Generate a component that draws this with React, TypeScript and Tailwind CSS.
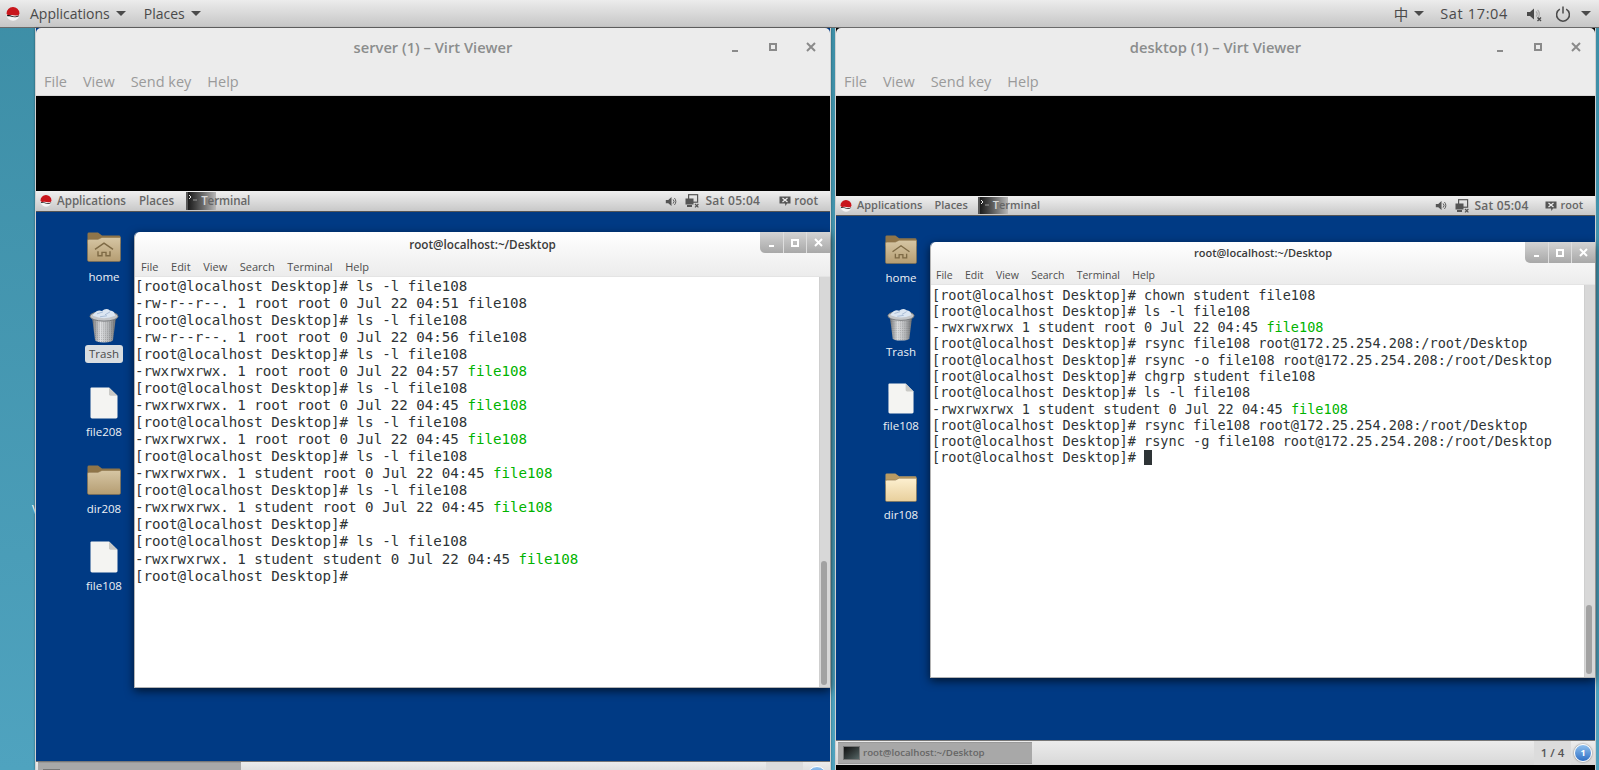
import React from "react";

const ui = "font-['Open_Sans',sans-serif]";
const mono = "font-['DejaVu_Sans_Mono',monospace]";

function RedHat({ size }: { size: number }) {
  return (
    <svg width={size} height={size} viewBox="0 0 16 16" className="shrink-0">
      <circle cx="8" cy="8" r="7.6" fill="#f4f4f4" />
      <path d="M0.6 7.6 A7.4 7.4 0 0 1 15.4 7.2 C15.6 9 13.6 10.2 11 9.7 C8 9.2 5.5 8.6 3.6 9.6 C2 9 0.9 8.6 0.6 7.6Z" fill="#c8161c" />
      <path d="M1 9.5 C3 8.8 5 9.4 7 10.2 C10 11.2 13 11 15 9.5 C15 9.8 14.8 10.2 14.6 10.6 C11.5 12.4 8 11.6 5.5 10.8 C4 10.4 2.6 10.3 1.6 10.7Z" fill="#111" />
    </svg>
  );
}

function Caret({ cls = "" }: { cls?: string }) {
  return <span className={`inline-block w-0 h-0 border-l-[5px] border-r-[5px] border-t-[5px] border-l-transparent border-r-transparent border-t-[#4a4a4a] ${cls}`} />;
}

function Speaker({ muted, size = 16, color = "#4a4a4a" }: { muted?: boolean; size?: number; color?: string }) {
  return (
    <svg width={size} height={size} viewBox="0 0 16 16" fill="none">
      <path d="M1 6 H4 L8 2.5 V13.5 L4 10 H1 Z" fill={color} />
      <path d="M10 5.5 A3.6 3.6 0 0 1 10 10.5 M11.6 3.8 A6 6 0 0 1 11.6 12.2" stroke={muted ? "#aaa" : color} strokeWidth="1.2" />
      {muted && <path d="M11.5 11.5 L15 15 M15 11.5 L11.5 15" stroke={color} strokeWidth="1.4" />}
    </svg>
  );
}

function Power() {
  return (
    <svg width="16" height="16" viewBox="0 0 16 16" fill="none" stroke="#4a4a4a" strokeWidth="1.5">
      <path d="M4.8 3.2 A6.4 6.4 0 1 0 11.2 3.2" />
      <path d="M8 0.5 V7.5" />
    </svg>
  );
}

function NetIcon() {
  return (
    <svg width="14" height="14" viewBox="0 0 14 14" fill="none">
      <rect x="3.6" y="0.7" width="9" height="7.5" stroke="#555" strokeWidth="1.2" fill="none" />
      <rect x="0.5" y="4.5" width="8" height="6" fill="#555" />
      <rect x="2" y="11" width="5" height="2" fill="#555" />
      <path d="M10 10 L13.4 13.4 M13.4 10 L10 13.4" stroke="#555" strokeWidth="1.2" />
    </svg>
  );
}

function UserIcon() {
  return (
    <svg width="12" height="12" viewBox="0 0 12 12">
      <path d="M0.5 1.5 H11.5 V8.5 H8 L6.5 11 L6 8.5 H0.5 Z" fill="#555" />
      <path d="M3.5 3 L8.5 7 M8.5 3 L3.5 7" stroke="#eee" strokeWidth="1.2" />
    </svg>
  );
}

function Folder({ home, light, w = 34, h = 30, uid }: { home?: boolean; light?: boolean; w?: number; h?: number; uid: string }) {
  const top = light ? "#fdf0d0" : "#d6c6a4";
  const bot = light ? "#e8cf9c" : "#b59d72";
  const tab = light ? "#b89a63" : "#8f7549";
  return (
    <svg width={w} height={h} viewBox="0 0 34 31" preserveAspectRatio="none">
      <defs>
        <linearGradient id={uid} x1="0" y1="0" x2="0" y2="1">
          <stop offset="0" stopColor={top} />
          <stop offset="1" stopColor={bot} />
        </linearGradient>
      </defs>
      <path d="M0.5 2 Q0.5 0.5 2 0.5 H11 L15 3.5 H32 Q33.5 3.5 33.5 5 V12 H0.5 Z" fill={tab} />
      <path d="M0.5 9 Q0.5 7.6 2 7.6 H11 L15 5.6 H33.5 V29 Q33.5 30.5 32 30.5 H2 Q0.5 30.5 0.5 29 Z" fill={`url(#${uid})`} stroke="#8a7147" strokeWidth="0.6" />
      {home && (
        <g fill="none" stroke="#7e6a45" strokeWidth="1.4">
          <path d="M8 18 L17 11.5 L26 18" />
          <path d="M11 20 V24.5 H15 V21 H19 V24.5 H23 V20" />
        </g>
      )}
    </svg>
  );
}

function Trash({ w = 30, h = 35, uid }: { w?: number; h?: number; uid: string }) {
  return (
    <svg width={w} height={h} viewBox="0 0 30 36" preserveAspectRatio="none">
      <defs>
        <linearGradient id={`${uid}b`} x1="0" y1="0" x2="1" y2="0">
          <stop offset="0" stopColor="#77797c" />
          <stop offset="0.35" stopColor="#dfe0e2" />
          <stop offset="0.7" stopColor="#b4b6b8" />
          <stop offset="1" stopColor="#6e7073" />
        </linearGradient>
        <pattern id={`${uid}p`} width="2" height="2" patternUnits="userSpaceOnUse">
          <rect width="1" height="1" fill="#000" opacity="0.18" />
        </pattern>
      </defs>
      <path d="M3 9 L6 33 Q6.5 35.5 15 35.5 Q23.5 35.5 24 33 L27 9 Z" fill={`url(#${uid}b)`} />
      <path d="M3 9 L6 33 Q6.5 35.5 15 35.5 Q23.5 35.5 24 33 L27 9 Z" fill={`url(#${uid}p)`} />
      <ellipse cx="15" cy="8.5" rx="14" ry="5" fill="#c4c6c9" stroke="#77797c" />
      <path d="M4 7 Q8 1 13 3 Q17 -0.5 21 2.5 Q26 3 26 8 Q15 13 4 8 Z" fill="#dce6f2" />
      <path d="M8 6 L14 4 M16 7 L21 4 M11 9 L18 8" stroke="#a8bcd6" strokeWidth="1" />
    </svg>
  );
}

function FileIcon({ w = 28, h = 32 }: { w?: number; h?: number }) {
  return (
    <svg width={w} height={h} viewBox="0 0 28 33" preserveAspectRatio="none">
      <path d="M1.5 0.5 H19 L27.5 9 V31 Q27.5 32.5 26 32.5 H2 Q0.5 32.5 0.5 31 V1.5 Q0.5 0.5 1.5 0.5 Z" fill="#f4f4f2" />
      <path d="M19 0.5 V7.5 Q19 9 20.5 9 H27.5 Z" fill="#c9c9c6" />
    </svg>
  );
}

function DeskIcon({ left, top, gap, label, children, boxed }: { left: number; top: number; gap: number; label: string; children: React.ReactNode; boxed?: boolean }) {
  return (
    <div className="absolute w-[70px] flex flex-col items-center" style={{ left, top }}>
      <div className="h-[36px] flex items-end justify-center">{children}</div>
      <span
        style={{ marginTop: gap }}
        className={
          boxed
            ? `${ui} text-[11.5px] leading-[18px] px-[4px] rounded-[3px] bg-[#d9dde0] text-[#4a4a4a]`
            : `${ui} text-[11.5px] leading-[16px] text-[#eef1f5]`
        }
      >
        {label}
      </span>
    </div>
  );
}

function WindowControls() {
  return (
    <div className="absolute right-[13px] top-[13px] flex gap-[26px] items-center">
      <span className="w-[12px] h-[12px] flex items-end justify-center"><span className="block w-[6px] h-[2px] mb-[1px] bg-[#8a8a8a]" /></span>
      <span className="w-[12px] h-[12px] flex items-center justify-center"><span className="block w-[8px] h-[8px] border-2 border-[#8a8a8a]" /></span>
      <svg width="12" height="12" viewBox="0 0 12 12"><path d="M2 2 L10 10 M10 2 L2 10" stroke="#8a8a8a" strokeWidth="2" /></svg>
    </div>
  );
}

function ViewerHeader({ title }: { title: string }) {
  return (
    <div className="relative h-[68px] shrink-0 bg-[#ececec] border-b border-[#d8d8d8] rounded-t-[5px]">
      <div className={`${ui} pt-[9px] text-center text-[14.7px] font-semibold leading-[20px] text-[#8b8d8d]`}>{title}</div>
      <WindowControls />
      <div className={`${ui} flex gap-[16px] pt-[15px] pl-[8px] text-[14.5px] leading-[20px] text-[#9a9a9a]`}>
        <span>File</span><span>View</span><span>Send key</span><span>Help</span>
      </div>
    </div>
  );
}

function TerminalGlyph() {
  return (
    <svg width="10" height="8" viewBox="0 0 10 8" className="absolute left-[2px] top-[3px]" fill="none" stroke="#eee" strokeWidth="1">
      <path d="M1 1 L3 3 L1 5" />
      <path d="M5 6 H9" stroke="#999" />
    </svg>
  );
}

function GuestPanel({ large }: { large?: boolean }) {
  return (
    <div
      className={`${large ? "h-[21px] text-[11.6px] pr-[12px]" : "h-[20px] text-[11px] pr-[12px]"} shrink-0 flex items-center pl-[4px] bg-gradient-to-b from-[#f0f0f0] to-[#c8c8c8] border-b border-[#555] ${ui} font-semibold text-[#666]`}
    >
      <RedHat size={12} />
      <span className="ml-[5px]">Applications</span>
      <span className={large ? "ml-[13px]" : "ml-[12px]"}>Places</span>
      <span className={`relative ${large ? "ml-[12px]" : "ml-[10px]"} h-full flex items-center`}>
        <span className="absolute left-0 top-[1px] bottom-[1px] w-[30px] bg-gradient-to-r from-[#1c1c1c] to-[#b8b8b8] border-l-2 border-[#555]" />
        <TerminalGlyph />
        <span className={`relative pl-[15px] ${large ? "tracking-[-0.1px]" : ""}`}><span className="text-[#d8d8d8]">T</span>erminal</span>
      </span>
      <div className="ml-auto flex items-center">
        <Speaker size={13} color="#555" />
        <span className="ml-[7px]"><NetIcon /></span>
        <span className={`ml-[6px] ${large ? "text-[12px] tracking-[0.3px]" : "text-[12px] tracking-[0.2px]"}`}>Sat 05:04</span>
        <span className={large ? "ml-[19px]" : "ml-[17px]"}><UserIcon /></span>
        <span className="ml-[3px]">root</span>
      </div>
    </div>
  );
}

function Taskbar() {
  return (
    <div className={`h-[25px] flex items-center pl-[2px] bg-gradient-to-b from-[#ececec] to-[#d8d8d8] border-t border-[#777] ${ui} font-semibold text-[#666] text-[9.7px]`}>
      <div className="w-[194px] h-[22px] flex items-center gap-[3px] pl-[5px] bg-[#a8a8a8] border-b border-t border-[#999]">
        <span className="w-[17px] h-[14px] border border-[#777] bg-gradient-to-br from-[#111] to-[#566] shrink-0" />
        <span>root@localhost:~/Desktop</span>
      </div>
      <div className="ml-auto h-full w-[37px] flex items-center justify-center bg-[#dcdcdc] text-[#555] text-[11.5px]">1 / 4</div>
      <div className="w-[24px] flex items-center justify-center">
        <span className="w-[18px] h-[18px] rounded-full bg-gradient-to-b from-[#8fc0ee] to-[#2f6fc4] border border-white flex items-center justify-center text-[9px] font-bold text-white shadow-[0_0_2px_rgba(0,0,0,0.6)]">1</span>
      </div>
    </div>
  );
}

/* The left guest's task bar runs off the bottom of the screen: only its top edge shows. */
function ClippedTaskbar() {
  return (
    <div className="h-[9px] shrink-0 overflow-hidden flex pl-[2px] bg-gradient-to-b from-[#ececec] to-[#e0e0e0] border-t border-[#777]">
      <div className="w-[203px] h-full pl-[5px] pt-[6px] bg-[#a8a8a8] border-t border-[#999]">
        <span className="block w-[17px] h-[14px] border border-[#777] bg-[#666]" />
      </div>
      <div className="ml-auto w-[37px] h-full bg-[#dcdcdc]" />
      <div className="w-[27px] pl-[4px] pt-[4px]">
        <span className="block w-[20px] h-[20px] rounded-full bg-gradient-to-b from-[#8fc0ee] to-[#2f6fc4] border border-white" />
      </div>
    </div>
  );
}

const P1 = "[root@localhost Desktop]# ";

function Line({ text, file }: { text: string; file?: string }) {
  return (
    <div className="whitespace-pre">
      {text}
      {file && <span className="text-[#00b300]">{file}</span>}
    </div>
  );
}

function TermMenu({ cls }: { cls: string }) {
  return (
    <div className={`${ui} flex ${cls} text-[#4e4e4e]`}>
      <span>File</span><span>Edit</span><span>View</span><span>Search</span><span>Terminal</span><span>Help</span>
    </div>
  );
}

function TermButtons() {
  return (
    <div className="absolute right-0 top-0 h-[21px] w-[70px] flex rounded-bl-[5px] bg-gradient-to-b from-[#d4d4d4] to-[#a8a8a8] overflow-hidden">
      <span className="flex-1 flex items-end justify-center pb-[6px] border-r border-[#dedede]"><span className="block w-[5px] h-[2px] bg-white" /></span>
      <span className="flex-1 flex items-center justify-center border-r border-[#dedede]"><span className="block w-[8px] h-[8px] border-2 border-white" /></span>
      <span className="flex-1 flex items-center justify-center">
        <svg width="9" height="9" viewBox="0 0 9 9"><path d="M1 1 L8 8 M8 1 L1 8" stroke="#fff" strokeWidth="2" /></svg>
      </span>
    </div>
  );
}

function Scrollbar({ thumb }: { thumb: string }) {
  return (
    <div className="w-[11px] shrink-0 bg-[#d8d8d8] border-l border-[#cfcfcf] relative">
      <div className={`absolute left-[1px] w-[6px] rounded-[3px] bg-[#a2a2a2] ${thumb}`} />
    </div>
  );
}

export default function App() {
  return (
    <div className="relative w-[1599px] h-[770px] overflow-hidden bg-gradient-to-b from-[#3d8ea6] to-[#4fa3bf]">
      {/* Top bar */}
      <div className={`${ui} absolute inset-x-0 top-0 h-[28px] flex items-center pl-[6px] pr-[8px] bg-gradient-to-b from-[#ececec] to-[#c6c6c6] border-b border-[#6a6a6a] text-[14px] text-[#4a4a4a]`}>
        <RedHat size={14} />
        <span className="ml-[10px]">Applications</span>
        <Caret cls="ml-[6px]" />
        <span className="ml-[18px]">Places</span>
        <Caret cls="ml-[6px]" />
        <div className="ml-auto flex items-center">
          <span className="font-['Noto_Sans_CJK_SC',sans-serif] text-[14.5px]">中</span>
          <Caret cls="ml-[6px]" />
          <span className="ml-[16px] text-[14.5px] tracking-[0.65px]">Sat 17:04</span>
          <span className="ml-[18px]"><Speaker muted /></span>
          <span className="ml-[13px]"><Power /></span>
          <Caret cls="ml-[10px]" />
        </div>
      </div>

      {/* Fragment of a desktop label peeking out beside the left window */}
      <span className={`${ui} absolute left-[32px] top-[502px] text-[12px] leading-[16px] text-white`}>V</span>

      {/* Left window */}
      <div className="absolute left-[35px] top-[28px] w-[796px] h-[742px] flex flex-col bg-[#003a84] shadow-[0_0_2px_rgba(0,0,0,0.4)] border-r border-l border-[#d0d0d0]">
        <ViewerHeader title="server (1) – Virt Viewer" />
        <div className="h-[95px] shrink-0 bg-black" />
        <GuestPanel large />
        <div className="relative flex-1 bg-[#003a84]">
          <DeskIcon left={33} top={14} gap={7} label="home"><Folder home uid="f1" /></DeskIcon>
          <DeskIcon left={33} top={95} gap={2} label="Trash" boxed><Trash uid="t1" /></DeskIcon>
          <DeskIcon left={33} top={171} gap={5} label="file208"><FileIcon /></DeskIcon>
          <DeskIcon left={33} top={247} gap={6} label="dir208"><Folder uid="f2" /></DeskIcon>
          <DeskIcon left={33} top={325} gap={5} label="file108"><FileIcon /></DeskIcon>

          <div className="absolute left-[98px] top-[20px] right-0 h-[456px] flex flex-col rounded-tl-[5px] border-l border-b border-[#b4b4b4] shadow-[0_3px_10px_rgba(0,0,0,0.65)]">
            <div className="relative h-[45px] shrink-0 rounded-t-[5px] bg-gradient-to-b from-[#ffffff] to-[#ececec] border-b border-[#e4e4e4]">
              <div className={`${ui} pt-[4px] text-center text-[11.7px] font-semibold leading-[16px] text-[#3a3a3a]`}>root@localhost:~/Desktop</div>
              <TermButtons />
              <TermMenu cls="gap-[12.6px] pl-[6px] pt-[7px] text-[11px] leading-[16px]" />
            </div>
            <div className="flex-1 flex min-h-0 bg-white">
              <div className={`${mono} flex-1 pt-[1px] text-[14.17px] leading-[17.03px] text-[#2e3436]`}>
                <Line text={P1 + "ls -l file108"} />
                <Line text="-rw-r--r--. 1 root root 0 Jul 22 04:51 file108" />
                <Line text={P1 + "ls -l file108"} />
                <Line text="-rw-r--r--. 1 root root 0 Jul 22 04:56 file108" />
                <Line text={P1 + "ls -l file108"} />
                <Line text="-rwxrwxrwx. 1 root root 0 Jul 22 04:57 " file="file108" />
                <Line text={P1 + "ls -l file108"} />
                <Line text="-rwxrwxrwx. 1 root root 0 Jul 22 04:45 " file="file108" />
                <Line text={P1 + "ls -l file108"} />
                <Line text="-rwxrwxrwx. 1 root root 0 Jul 22 04:45 " file="file108" />
                <Line text={P1 + "ls -l file108"} />
                <Line text="-rwxrwxrwx. 1 student root 0 Jul 22 04:45 " file="file108" />
                <Line text={P1 + "ls -l file108"} />
                <Line text="-rwxrwxrwx. 1 student root 0 Jul 22 04:45 " file="file108" />
                <Line text={P1.trimEnd()} />
                <Line text={P1 + "ls -l file108"} />
                <Line text="-rwxrwxrwx. 1 student student 0 Jul 22 04:45 " file="file108" />
                <Line text={P1.trimEnd()} />
              </div>
              <Scrollbar thumb="top-[284px] bottom-[2px]" />
            </div>
          </div>
        </div>
        <ClippedTaskbar />
      </div>

      {/* Right window */}
      <div className="absolute left-[835px] top-[28px] w-[761px] h-[742px] flex flex-col bg-black border-l border-r border-[#d0d0d0]">
        <ViewerHeader title="desktop (1) – Virt Viewer" />
        <div className="h-[100px] shrink-0 bg-black" />
        <GuestPanel />
        <div className="relative h-[524px] shrink-0 bg-[#003a84]">
          <DeskIcon left={30} top={12} gap={6} label="home"><Folder home w={32} h={29} uid="f3" /></DeskIcon>
          <DeskIcon left={30} top={89} gap={3} label="Trash"><Trash w={28} h={33} uid="t2" /></DeskIcon>
          <DeskIcon left={30} top={162} gap={4} label="file108"><FileIcon w={26} h={31} /></DeskIcon>
          <DeskIcon left={30} top={250} gap={5} label="dir108"><Folder light w={32} h={29} uid="f4" /></DeskIcon>

          <div className="absolute left-[94px] top-[26px] right-0 h-[436px] flex flex-col rounded-tl-[5px] border-l border-b border-[#b4b4b4] shadow-[0_3px_10px_rgba(0,0,0,0.65)]">
            <div className="relative h-[43px] shrink-0 rounded-t-[5px] bg-gradient-to-b from-[#ffffff] to-[#ececec] border-b border-[#e4e4e4]">
              <div className={`${ui} pt-[3px] text-center text-[11px] font-semibold leading-[16px] text-[#3a3a3a]`}>root@localhost:~/Desktop</div>
              <TermButtons />
              <TermMenu cls="gap-[12.3px] pl-[5px] pt-[6px] text-[10.5px] leading-[16px]" />
            </div>
            <div className="flex-1 flex min-h-0 bg-white">
              <div className={`${mono} flex-1 pl-[1px] pt-[1.5px] text-[13.55px] leading-[16.3px] text-[#2e3436]`}>
                <Line text={P1 + "chown student file108"} />
                <Line text={P1 + "ls -l file108"} />
                <Line text="-rwxrwxrwx 1 student root 0 Jul 22 04:45 " file="file108" />
                <Line text={P1 + "rsync file108 root@172.25.254.208:/root/Desktop"} />
                <Line text={P1 + "rsync -o file108 root@172.25.254.208:/root/Desktop"} />
                <Line text={P1 + "chgrp student file108"} />
                <Line text={P1 + "ls -l file108"} />
                <Line text="-rwxrwxrwx 1 student student 0 Jul 22 04:45 " file="file108" />
                <Line text={P1 + "rsync file108 root@172.25.254.208:/root/Desktop"} />
                <Line text={P1 + "rsync -g file108 root@172.25.254.208:/root/Desktop"} />
                <div className="whitespace-pre flex items-center">
                  {P1}
                  <span className="inline-block w-[8px] h-[15px] bg-[#2e3436]" />
                </div>
              </div>
              <Scrollbar thumb="top-[320px] bottom-[3px]" />
            </div>
          </div>
        </div>
        <Taskbar />
        <div className="flex-1 bg-black" />
      </div>
    </div>
  );
}
